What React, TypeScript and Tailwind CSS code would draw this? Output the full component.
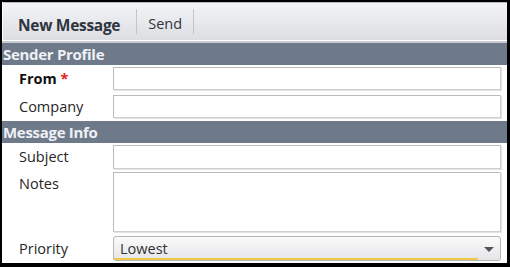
import React from 'react';

const font = { fontFamily: '"Open Sans", "Noto Sans", sans-serif' };

const SectionHeader: React.FC<{ title: string }> = ({ title }) => (
  <div className="h-[22px] bg-[#6e7a8a] pl-[1px] flex items-center text-[15px] font-bold text-[#eef1f5] tracking-[-0.3px]">
    {title}
  </div>
);

const Row: React.FC<{ label: React.ReactNode; children: React.ReactNode; top?: boolean; className?: string }> = ({
  label,
  children,
  top,
  className = '',
}) => (
  <div className={`flex ${top ? 'items-start' : 'items-center'} pr-[6px] ${className}`}>
    <div className={`w-[111px] pl-[17px] text-[14.5px] text-[#262626] ${top ? 'pt-[1px]' : ''}`}>{label}</div>
    <div className="flex-1">{children}</div>
  </div>
);

const TextBox: React.FC<{ h: string }> = ({ h }) => (
  <div className={`${h} border border-[#bcbcbc] border-r-[#cfcfcf] border-b-[#cfcfcf] bg-white shadow-[1px_1px_0_#e2e2e2]`} />
);

export default function App() {
  return (
    <div className="w-[510px] h-[267px] bg-black pt-[2px] pl-[2px] pr-[3px] pb-[4px]" style={font}>
      <div className="h-full bg-white flex flex-col">
        {/* toolbar */}
        <div className="h-[38px] ml-[1px] border-t border-[#b9bcc2] bg-gradient-to-b from-[#f3f4f6] to-[#dddee2] flex items-stretch">
          <div className="flex items-center pl-[15px] pr-[16px] pt-[9px] text-[15.5px] font-bold text-[#2e3440] tracking-[-0.3px]">
            New Message
          </div>
          <div className="w-[1px] bg-[#c3c5ca] my-[6px]" />
          <div className="flex items-center px-[11px] pt-[4px] text-[14.5px] text-[#2e3440]">Send</div>
          <div className="w-[1px] bg-[#c3c5ca] my-[6px]" />
        </div>
        <div className="h-[1px] bg-white" />
        <div className="h-[2px] bg-[#c9cbd0]" />
        <SectionHeader title="Sender Profile" />
        <Row
          className="mt-[2px]"
          label={
            <span className="font-bold text-[#111]">
              From <span className="text-[#e02020]">*</span>
            </span>
          }
        >
          <TextBox h="h-[23px]" />
        </Row>
        <Row className="mt-[5px]" label="Company">
          <TextBox h="h-[23px]" />
        </Row>
        <div className="mt-[3px]">
          <SectionHeader title="Message Info" />
        </div>
        <Row className="mt-[2px]" label="Subject">
          <TextBox h="h-[24px]" />
        </Row>
        <Row className="mt-[3px]" top label="Notes">
          <TextBox h="h-[60px]" />
        </Row>
        <Row className="mt-[4px]" label="Priority">
          <div className="relative h-[25px] rounded-[3px] border border-[#b5b5b5] bg-gradient-to-b from-[#fbfbfb] to-[#e4e5e7] flex items-center pl-[6px] text-[14.5px] text-[#333]">
            Lowest
            <svg className="absolute right-[6px] top-[10px]" width="10" height="5" viewBox="0 0 10 5">
              <path d="M0 0 L10 0 L5 5 Z" fill="#555" />
            </svg>
            <div className="absolute left-0 right-[22px] bottom-0 h-[2px] bg-[#f0c94a]" />
          </div>
        </Row>
      </div>
    </div>
  );
}
